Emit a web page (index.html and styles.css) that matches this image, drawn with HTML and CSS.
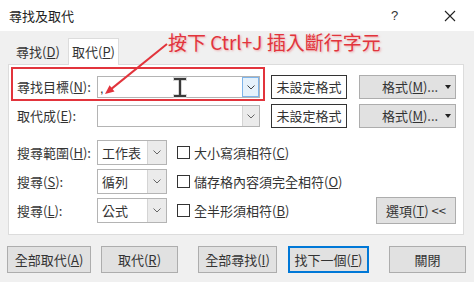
FILE: index.html
```html
<!DOCTYPE html>
<html lang="zh-Hant">
<head>
<meta charset="utf-8">
<title>尋找及取代</title>
<link rel="stylesheet" href="styles.css">
</head>
<body>
<div class="window">
  <div class="titlebar">
    <span class="title">尋找及取代</span>
    <span class="help">?</span>
    <svg class="close" width="12" height="12" viewBox="0 0 12 12"><path d="M1 1L11 11M11 1L1 11" stroke="#222" stroke-width="1.1" fill="none"/></svg>
  </div>
  <div class="body">
    <div class="tabs">
      <div class="tab">尋找(<u>D</u>)</div>
      <div class="tab active">取代(<u>P</u>)</div>
    </div>
    <div class="panel">
      <div class="row r1">
        <span class="lbl">尋找目標(<u>N</u>):</span>
        <div class="combo wide">
          <span class="val"><span class="comma">,</span></span>
          <span class="drop hot"><svg width="8" height="5" viewBox="0 0 8 5"><path d="M0.5 0.5L4 4L7.5 0.5" stroke="#444" fill="none"/></svg></span>
        </div>
        <div class="fmtbox">未設定格式</div>
        <div class="btn fmt"><span>格式(<u>M</u>)...</span><span class="tri"></span></div>
      </div>
      <div class="row r2">
        <span class="lbl">取代成(<u>E</u>):</span>
        <div class="combo wide">
          <span class="val"></span>
          <span class="drop"><svg width="8" height="5" viewBox="0 0 8 5"><path d="M0.5 0.5L4 4L7.5 0.5" stroke="#666" fill="none"/></svg></span>
        </div>
        <div class="fmtbox">未設定格式</div>
        <div class="btn fmt"><span>格式(<u>M</u>)...</span><span class="tri"></span></div>
      </div>
      <div class="row r3">
        <span class="lbl">搜尋範圍(<u>H</u>):</span>
        <div class="combo small">
          <span class="val">工作表</span>
          <span class="drop"><svg width="8" height="5" viewBox="0 0 8 5"><path d="M0.5 0.5L4 4L7.5 0.5" stroke="#666" fill="none"/></svg></span>
        </div>
        <span class="check"><span class="box"></span>大小寫須相符(<u>C</u>)</span>
      </div>
      <div class="row r4">
        <span class="lbl">搜尋(<u>S</u>):</span>
        <div class="combo small">
          <span class="val">循列</span>
          <span class="drop"><svg width="8" height="5" viewBox="0 0 8 5"><path d="M0.5 0.5L4 4L7.5 0.5" stroke="#666" fill="none"/></svg></span>
        </div>
        <span class="check"><span class="box"></span>儲存格內容須完全相符(<u>O</u>)</span>
      </div>
      <div class="row r5">
        <span class="lbl">搜尋(<u>L</u>):</span>
        <div class="combo small">
          <span class="val">公式</span>
          <span class="drop"><svg width="8" height="5" viewBox="0 0 8 5"><path d="M0.5 0.5L4 4L7.5 0.5" stroke="#666" fill="none"/></svg></span>
        </div>
        <span class="check"><span class="box"></span>全半形須相符(<u>B</u>)</span>
        <div class="btn opts">選項(<u>T</u>) &lt;&lt;</div>
      </div>
    </div>
    <div class="footer">
      <div class="btn b1">全部取代(<u>A</u>)</div>
      <div class="btn b2">取代(<u>R</u>)</div>
      <div class="btn b3">全部尋找(<u>I</u>)</div>
      <div class="btn b4 focus">找下一個(<u>F</u>)</div>
      <div class="btn b5">關閉</div>
    </div>
  </div>

  <div class="note">按下 Ctrl+J 插入斷行字元</div>
  <div class="redbox"></div>
  <svg class="arrow" width="474" height="282" viewBox="0 0 474 282">
    <line x1="167" y1="44" x2="108.9" y2="90.9" stroke="#e2343c" stroke-width="2"/>
    <polygon points="105,94 114.5,91.5 109.6,85.3" fill="#e2343c"/>
  </svg>
  <svg class="ibeam" width="16" height="23" viewBox="0 0 16 23">
    <path d="M1.5 1.5H14.5V4.5H9.5V18.5H14.5V21.5H1.5V18.5H6.5V4.5H1.5Z" fill="#3a3a3a" stroke="#d8d8d8" stroke-width="1"/>
  </svg>
</div>
</body>
</html>
```

FILE: styles.css
```css
* { box-sizing: border-box; }
html, body { margin: 0; padding: 0; }
body {
  width: 474px;
  height: 282px;
  overflow: hidden;
  background: #f0f0f0;
  font-family: "Noto Sans CJK TC", "Noto Sans", sans-serif;
  font-size: 13px;
  line-height: 16px;
  color: #1e1e1e;
}
u { text-decoration: underline; text-underline-offset: 1px; text-decoration-thickness: 1px; }

.window { position: relative; width: 474px; height: 282px; }

.titlebar {
  height: 31px;
  background: #ffffff;
  display: flex;
  align-items: center;
  padding-left: 9px;
}
.title { font-size: 13px; color: #222; }
.help { margin-left: auto; width: 10px; margin-right: 43px; font-size: 13px; color: #333; font-family: "Liberation Sans", sans-serif; }
.close { margin-right: 18px; }

.body { padding-top: 7px; }

.tabs { display: flex; height: 26px; padding-left: 8px; }
.tab {
  display: flex;
  align-items: center;
  justify-content: center;
  height: 26px;
  color: #333;
}
.tab:first-child { width: 60px; padding-top: 2px; }
.tab.active {
  width: 51px;
  background: #fff;
  border: 1px solid #dcdcdc;
  border-bottom: none;
  position: relative;
  z-index: 1;
  margin-bottom: -1px;
  height: 27px;
}

.panel {
  margin-left: 8px;
  width: 456px;
  height: 171px;
  background: #fff;
  border: 1px solid #dcdcdc;
  padding: 10px 7px 0 8px;
}

.row { display: flex; align-items: center; }
.r1 { height: 24px; }
.r2 { height: 24px; margin-top: 5px; }
.r3 { height: 25px; margin-top: 12px; }
.r4 { height: 25px; margin-top: 4px; }
.r5 { height: 25px; margin-top: 4px; }

.lbl { width: 80px; color: #333; }

.combo {
  display: flex;
  border: 1px solid #b4b4b4;
  background: #fff;
}
.combo.wide { width: 163px; height: 22px; }
.combo.small { width: 70px; height: 25px; }
.val { flex: 1; padding-left: 4px; display: flex; align-items: center; color: #333; }
.wide .val { padding-left: 2px; }
.comma { font-family: "Liberation Sans", sans-serif; font-size: 13px; color: #222; margin-top: 4px; }
.drop {
  display: flex;
  align-items: center;
  justify-content: center;
  background: #ebebeb;
  border-left: 1px solid #d4d4d4;
}
.wide .drop { width: 17px; }
.small .drop { width: 19px; }
.drop.hot { background: #e5f1fb; border: 1px solid #7eb4ea; }

.fmtbox {
  width: 76px;
  height: 24px;
  margin-left: 11px;
  border: 1px solid #333;
  display: flex;
  align-items: center;
  justify-content: center;
  color: #333;
}

.btn {
  display: flex;
  align-items: center;
  justify-content: center;
  background: #e1e1e1;
  border: 1px solid #adadad;
  color: #333;
}
.btn.fmt {
  width: 97px;
  height: 24px;
  margin-left: 12px;
  justify-content: flex-start;
  padding-left: 22px;
  padding-right: 4px;
}
.tri {
  margin-left: auto;
  width: 0; height: 0;
  border-left: 3px solid transparent;
  border-right: 3px solid transparent;
  border-top: 4px solid #222;
}

.check { display: flex; align-items: center; margin-left: 10px; color: #333; }
.box {
  width: 13px; height: 13px;
  border: 1px solid #333;
  background: #fff;
  margin-right: 4px;
}

.btn.opts { width: 80px; height: 27px; margin-left: auto; margin-right: 0; }

.footer { display: flex; padding-top: 11px; padding-left: 7px; }
.footer .btn { height: 27px; }
.b1 { width: 84px; }
.b2 { width: 77px; margin-left: 10px; }
.b3 { width: 79px; margin-left: 20px; }
.b4 { width: 81px; margin-left: 11px; }
.b5 { width: 77px; margin-left: 20px; }
.btn.focus { border: 2px solid #0078d7; }

.note {
  position: absolute;
  left: 168px;
  top: 30px;
  font-size: 19px;
  line-height: 24px;
  color: #e2343c;
  text-shadow: 1px 1px 2px rgba(235, 120, 120, 0.55);
  white-space: nowrap;
}
.redbox {
  position: absolute;
  left: 11px;
  top: 67px;
  width: 254px;
  height: 34px;
  border: 2px solid #e2343c;
}
.arrow { position: absolute; left: 0; top: 0; pointer-events: none; }
.ibeam { position: absolute; left: 172px; top: 76px; }
```
